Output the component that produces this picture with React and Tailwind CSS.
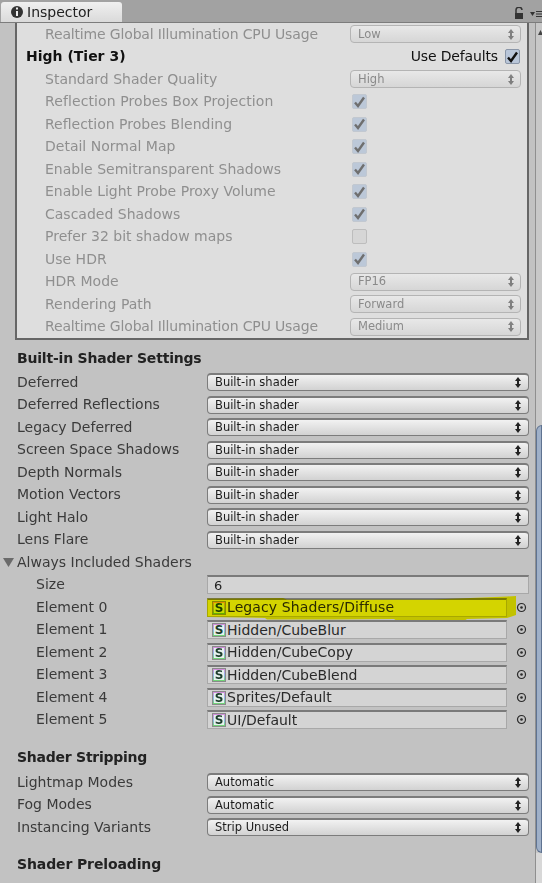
const tier3 = [
  { label: 'Standard Shader Quality', select: 'High' },
  { label: 'Reflection Probes Box Projection', checked: true, track: 'tracking-[0.1px]' },
  { label: 'Reflection Probes Blending', checked: true },
  { label: 'Detail Normal Map', checked: true },
  { label: 'Enable Semitransparent Shadows', checked: true },
  { label: 'Enable Light Probe Proxy Volume', checked: true },
  { label: 'Cascaded Shadows', checked: true },
  { label: 'Prefer 32 bit shadow maps', checked: false },
  { label: 'Use HDR', checked: true },
  { label: 'HDR Mode', select: 'FP16' },
  { label: 'Rendering Path', select: 'Forward' },
  { label: 'Realtime Global Illumination CPU Usage', select: 'Medium', track: 'tracking-[-0.16px]' },
];

const builtIn = ['Deferred', 'Deferred Reflections', 'Legacy Deferred', 'Screen Space Shadows', 'Depth Normals', 'Motion Vectors', 'Light Halo', 'Lens Flare'];

const shaders = ['Legacy Shaders/Diffuse', 'Hidden/CubeBlur', 'Hidden/CubeCopy', 'Hidden/CubeBlend', 'Sprites/Default', 'UI/Default'];

const stripping = [
  { label: 'Lightmap Modes', value: 'Automatic' },
  { label: 'Fog Modes', value: 'Automatic' },
  { label: 'Instancing Variants', value: 'Strip Unused' },
];

const Arrows = ({ dim }) => (
  <svg width="6" height="11" viewBox="0 0 6 11" className={dim ? 'opacity-50' : ''}>
    <path d="M3 0 L6 4 H0 Z M3 11 L0 7 H6 Z M2 4 H4 V7 H2 Z" fill="#222" />
  </svg>
);

const TierSelect = ({ value }) => (
  <div className="ml-auto mr-[6px] w-[171px] h-[18px] flex items-center justify-between pl-[7px] pr-[6px] rounded-[4px] border border-[#b4b4b4] bg-gradient-to-b from-[#e8e8e8] to-[#d6d6d6] text-[11.5px] text-[#8a8a8a]">
    <span>{value}</span>
    <Arrows dim />
  </div>
);

const Select = ({ value }) => (
  <div className="w-[322px] h-[18px] flex items-center justify-between pl-[7px] pr-[7px] rounded-[4px] border border-[#7c7c7c] border-t-2 bg-gradient-to-b from-[#f2f2f2] to-[#d2d2d2] text-[11.5px] text-[#1c1c1c]">
    <span>{value}</span>
    <Arrows />
  </div>
);

const Check = ({ checked }) => (
  <div className={`w-[15px] h-[15px] rounded-[2px] border flex items-center justify-center ${checked ? 'border-[#c2c8d0] bg-[#bcc8d8]' : 'border-[#bdbdbd] bg-[#d6d6d6]'}`}>
    {checked && (
      <svg width="13" height="12" viewBox="0 0 13 12">
        <path d="M2 6.5 L5 10 L11 1.5" fill="none" stroke="#6f6f6f" strokeWidth="2.4" />
      </svg>
    )}
  </div>
);

const ShaderIcon = ({ orange }) => (
  <div className={`w-[14px] h-[14px] shrink-0 p-[1px] border border-[#8a8a8a] bg-gradient-to-b ${orange ? 'from-[#e88a2a] to-[#58b030]' : 'from-[#d58ad8] via-[#8fb6f0] to-[#6fd66a]'}`}>
    <div className={`w-full h-full flex items-center justify-center text-[12px] leading-none font-bold text-[#1d3d2c] ${orange ? 'bg-[#c8dc50]' : 'bg-[#e6f2ee]'}`}>
      S
    </div>
  </div>
);

const ObjectPicker = () => (
  <svg width="11" height="11" viewBox="0 0 11 11" className="shrink-0">
    <circle cx="5.5" cy="5.5" r="4" fill="none" stroke="#2a2a2a" strokeWidth="1.2" />
    <circle cx="5.5" cy="5.5" r="1.3" fill="#2a2a2a" />
  </svg>
);

// the hand drawn marker stroke over Element 0
const Highlight = () => (
  <svg width="312" height="28" viewBox="0 -3 312 28" className="absolute left-[-1px] top-[-5px] mix-blend-multiply pointer-events-none">
    <path d="M0 0.5 L76 0 L80 1.5 L226 1.5 L300 -1.5 L309 -2 L309 17 L300 20 L260 21 L257 23 L190 23 L187 21 L127 21.5 L60 21.5 L58 20 L0 19 Z" fill="#ffff00" />
  </svg>
);

const Row = ({ children, className = '' }) => (
  <div className={`h-[22.5px] flex items-center ${className}`}>{children}</div>
);

const App = () => {
  return (
    <div className="w-[542px] h-[883px] overflow-hidden flex flex-col bg-[#c2c2c2] text-[14px] text-[#3a3a3a] font-['DejaVu_Sans',sans-serif]">
      {/* tab strip */}
      <div className="h-[23px] shrink-0 flex items-end bg-[#a2a2a2] border-b border-[#7c7c7c]">
        <div className="w-[121px] h-[20px] ml-[1px] flex items-center gap-[3px] pl-[9px] rounded-t-[3px] bg-gradient-to-b from-[#f0f0f0] to-[#dadada] text-[#222]">
          <svg width="14" height="14" viewBox="0 0 14 14">
            <circle cx="7" cy="7" r="6" fill="#333" />
            <rect x="6" y="2.5" width="2" height="2" fill="#eee" />
            <rect x="6" y="6" width="2" height="5" fill="#eee" />
          </svg>
          <span>Inspector</span>
        </div>
        <div className="ml-auto mb-[2px] flex items-center gap-[6px]">
          <svg width="10" height="13" viewBox="0 0 10 13">
            <path d="M2 6 V3.5 A3 3 0 0 1 8 3" fill="none" stroke="#333" strokeWidth="1.5" />
            <rect x="1" y="6" width="8" height="6" fill="#333" />
          </svg>
          <svg width="12" height="8" viewBox="0 0 12 8">
            <path d="M0 2 H5 L2.5 6 Z M6 1 H12 V2 H6 Z M6 3.5 H12 V4.5 H6 Z M6 6 H12 V7 H6 Z" fill="#333" />
          </svg>
        </div>
      </div>

      <div className="flex-1 flex min-h-0">
        <div className="w-[535px] shrink-0 flex flex-col">
          {/* Tier box */}
          <div className="ml-[15px] w-[514px] shrink-0 h-[317px] border-l-2 border-r-2 border-b-2 border-[#666666] bg-[#dedede] pl-[8px]">
            <Row className="text-[#8f8f8f] pl-[20px]">
              <span className="tracking-[-0.16px]">Realtime Global Illumination CPU Usage</span>
              <TierSelect value="Low" />
            </Row>
            <Row className="text-[#111]">
              <span className="font-bold ml-[1px]">High (Tier 3)</span>
              <span className="ml-auto tracking-[-0.15px]">Use Defaults</span>
              <div className="ml-[7px] mr-[7px] w-[15px] h-[15px] rounded-[2px] border border-[#8a96a8] bg-[#b9c6d9] flex items-center justify-center">
                <svg width="13" height="12" viewBox="0 0 13 12">
                  <path d="M2 6.5 L5 10 L11 1.5" fill="none" stroke="#111" strokeWidth="2.4" />
                </svg>
              </div>
            </Row>
            {tier3.map((row) => (
              <Row key={row.label} className="text-[#8f8f8f] pl-[20px]">
                <span className={row.track}>{row.label}</span>
                {row.select ? (
                  <TierSelect value={row.select} />
                ) : (
                  <div className="ml-auto mr-[160px]">
                    <Check checked={row.checked} />
                  </div>
                )}
              </Row>
            ))}
          </div>

          <div className="pl-[17px] pr-[6px] pt-[7px]">
            <Row className="font-bold text-[#222] tracking-[-0.2px] mb-[1.5px]">Built-in Shader Settings</Row>
            {builtIn.map((label) => (
              <Row key={label} className="justify-between">
                <span>{label}</span>
                <Select value="Built-in shader" />
              </Row>
            ))}

            <Row className="ml-[-14px]">
              <svg width="11" height="9" viewBox="0 0 11 9" className="mr-[3px]">
                <path d="M0 0 H11 L5.5 9 Z" fill="#6a6a6a" />
              </svg>
              <span>Always Included Shaders</span>
            </Row>
            <Row className="justify-between pl-[19px]">
              <span>Size</span>
              <div className="w-[322px] h-[19px] border border-[#a8a8a8] border-t-[#7a7a7a] border-t-2 bg-[#d4d4d4] flex items-center pl-[6px] text-[13px] text-[#222]">
                6
              </div>
            </Row>
            {shaders.map((name, i) => (
              <Row key={name} className="pl-[19px]">
                <span>Element {i}</span>
                <div className="relative ml-auto w-[300px] h-[19px] border border-[#a8a8a8] border-t-[#7a7a7a] border-t-2 bg-[#d4d4d4] flex items-center gap-[1px] pl-[4px] text-[#2a2a2a]">
                  <ShaderIcon orange={i === 0} />
                  <span className={i === 0 ? 'tracking-[0.1px]' : ''}>{name}</span>
                  {i === 0 && <Highlight />}
                </div>
                <div className="w-[22px] flex justify-end pr-[2px]">
                  <ObjectPicker />
                </div>
              </Row>
            ))}

            <Row className="font-bold text-[#222] mt-[15px] mb-[2.5px] tracking-[-0.25px]">Shader Stripping</Row>
            {stripping.map((row) => (
              <Row key={row.label} className="justify-between">
                <span>{row.label}</span>
                <Select value={row.value} />
              </Row>
            ))}
            <Row className="font-bold text-[#222] mt-[15px] tracking-[-0.12px]">Shader Preloading</Row>
          </div>
        </div>

        {/* scrollbar */}
        <div className="relative w-[7px] shrink-0 flex flex-col border-l border-[#8f8f8f] bg-[#c8c8c8]">
          <svg width="5" height="5" viewBox="0 0 5 5" className="absolute left-[2px] top-[7px]">
            <path d="M2.5 0 L5 5 H0 Z" fill="#444" />
          </svg>
          <div className="h-[402px] shrink-0" />
          <div className="h-[428px] rounded-tl-[6px] rounded-bl-[6px] border border-[#5f7391] bg-[#9fb0c8]" />
          <div className="flex-1 bg-[#d8d8d8]" />
        </div>
      </div>
    </div>
  );
};

export default App;
